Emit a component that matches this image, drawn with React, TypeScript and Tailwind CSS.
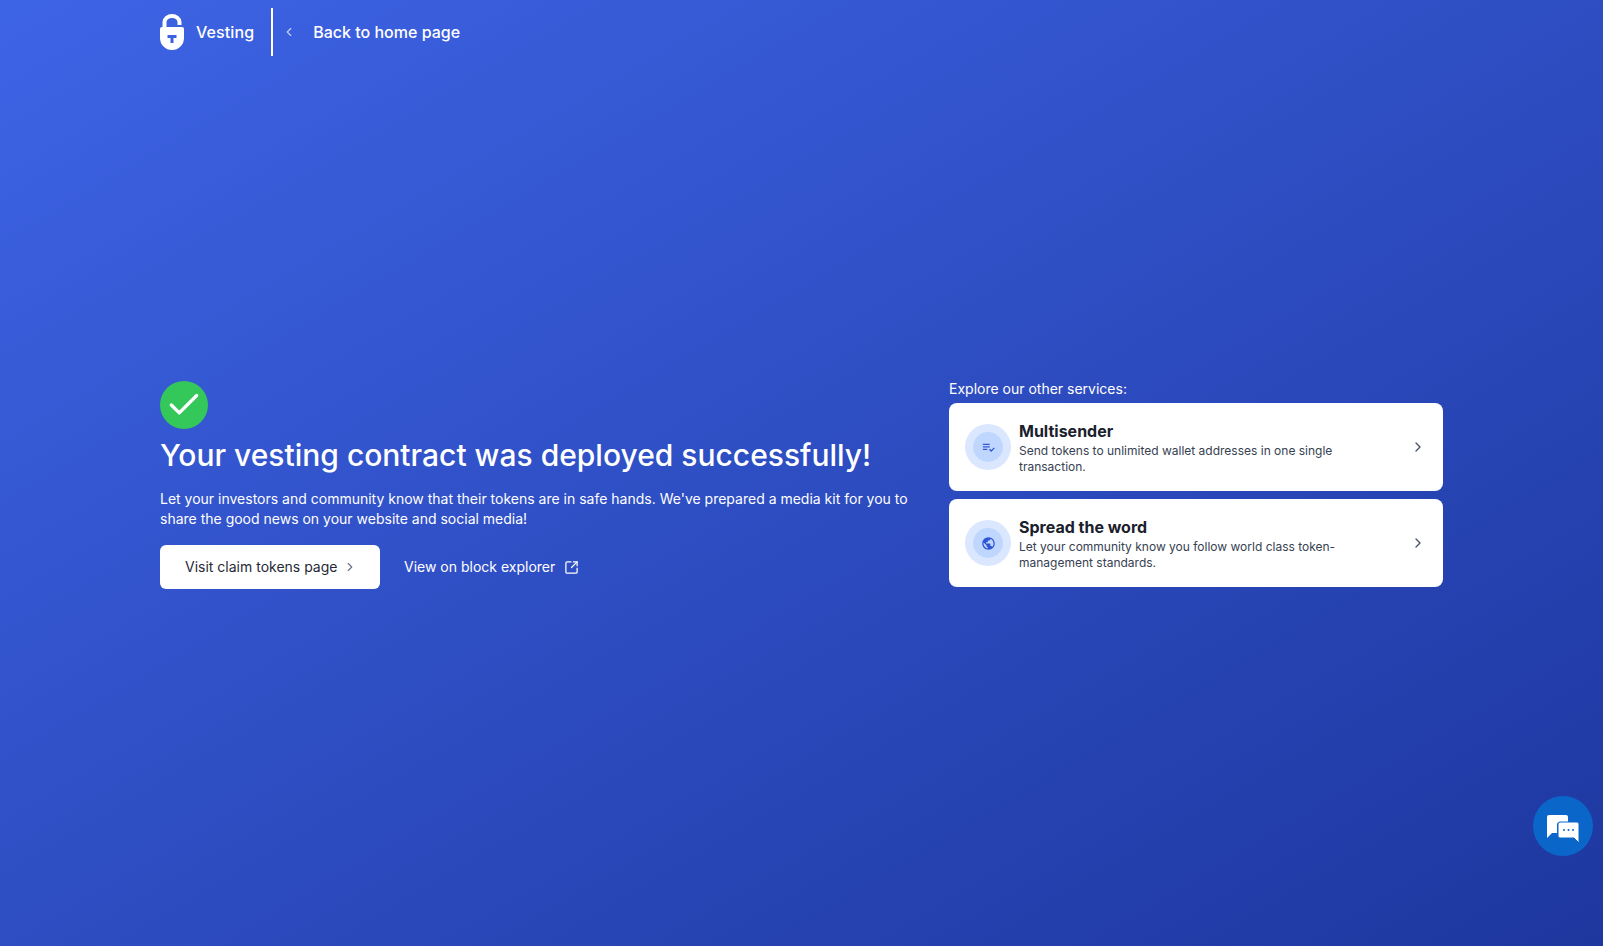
import React from 'react';
import { ChevronLeft, ChevronRight, SquareArrowOutUpRight, Check } from 'lucide-react';
import { MdPlaylistAddCheck, MdPublic } from 'react-icons/md';

const services = [
    {
        id: 1,
        title: "Multisender",
        details: "Send tokens to unlimited wallet addresses in one single transaction.",
        icon: <MdPlaylistAddCheck className="w-[15px] h-[15px] text-[#3358d4]" />,
    },
    {
        id: 2,
        title: "Spread the word",
        details: "Let your community know you follow world class token-management standards.",
        icon: <MdPublic className="w-[15px] h-[15px] text-[#2f55d4]" />,
    },
];

const LockLogo = () => (
    <svg width="24" height="36" viewBox="0 0 24 36" fill="none">
        <path d="M4.500 14V8a7.500 6 0 0 1 15 0V11" stroke="white" strokeWidth="4" />
        <path fillRule="evenodd" clipRule="evenodd" fill="white" d="M2 13h20a2 2 0 0 1 2 2v9a12 12 0 0 1-24 0v-9a2 2 0 0 1 2-2zM7.500 21v3h3v5h3v-5h3v-3h-9z" />
    </svg>
);

const ChatBubbles = () => (
    <svg width="32" height="28" viewBox="0 0 32 28" fill="none" className="mt-[5px]">
        <path fill="white" d="M2 0h17a2 2 0 0 1 2 2v5H13a3 3 0 0 0-3 3v8H5l-5 5V2a2 2 0 0 1 2-2z" />
        <path fill="white" stroke="#0a66c9" strokeWidth="1" d="M13 7h17a2 2 0 0 1 2 2v19l-5-5H13a2 2 0 0 1-2-2V9a2 2 0 0 1 2-2z" />
        <circle cx="17" cy="15" r="1" fill="#0a66c9" />
        <circle cx="21.500" cy="15" r="1" fill="#0a66c9" />
        <circle cx="26" cy="15" r="1" fill="#0a66c9" />
    </svg>
);

const App = () => {
    return (
        <div className="relative h-screen overflow-hidden bg-gradient-to-br from-[#3e64e6] to-[#1e379f] font-['Inter',sans-serif] text-white">
            <div className="pl-[160px] pr-[160px]">

                {/* Header */}
                <header className="flex items-center h-[64px]">
                    <LockLogo />
                    <span className="ml-3 text-base font-medium tracking-[0.1px]">Vesting</span>
                    <div className="ml-[17px] w-[2px] h-[48px] bg-white" />
                    <ChevronLeft className="ml-[9px] w-[14px] h-[14px] text-white/70" />
                    <span className="ml-[17px] text-base font-medium">Back to home page</span>
                </header>

                <main className="flex items-start justify-between pt-[317px]">

                    {/* Success message */}
                    <div className="w-[760px]">
                        <div className="w-12 h-12 rounded-full bg-[#34c759] flex items-center justify-center">
                            <Check className="w-[38px] h-[38px] text-white" strokeWidth={2.1} />
                        </div>
                        <h1 className="mt-[5px] text-[30px] leading-[42px] font-medium">
                            Your vesting contract was deployed successfully!
                        </h1>
                        <p className="mt-[13px] text-sm leading-5">
                            Let your investors and community know that their tokens are in safe hands. We've prepared a media kit for you to share the good news on your website and social media!
                        </p>
                        <div className="mt-4 flex items-center">
                            <button className="h-[44px] w-[220px] rounded-md bg-white text-[#1f2937] text-sm flex items-center pl-[25px] gap-[6px]">
                                Visit claim tokens page
                                <ChevronRight className="w-[14px] h-[14px] text-gray-500" />
                            </button>
                            <a className="ml-6 text-sm flex items-center gap-[9px]">
                                View on block explorer
                                <SquareArrowOutUpRight className="w-[15px] h-[15px]" />
                            </a>
                        </div>
                    </div>

                    {/* Other services */}
                    <div className="w-[494px]">
                        <p className="text-sm leading-[22px] font-normal -mt-[3px] pb-[3px]">Explore our other services:</p>
                        <div className="flex flex-col gap-2">
                            {services.map((service) => (
                                <div key={service.id} className="h-[88px] rounded-lg bg-white pl-4 pr-[17px] flex items-center text-[#1a202c]">
                                    <div className="w-[46px] h-[46px] shrink-0 rounded-full bg-[#dbe7ff] flex items-center justify-center">
                                        <div className="w-[30px] h-[30px] rounded-full bg-[#bfd6ff] flex items-center justify-center">
                                            {service.icon}
                                        </div>
                                    </div>
                                    <div className="ml-2 mt-[1px] flex-1 pr-[60px]">
                                        <h3 className="text-base leading-[22px] font-bold">{service.title}</h3>
                                        <p className="text-xs leading-4 pt-[1px] text-[#374151]">{service.details}</p>
                                    </div>
                                    <ChevronRight className="w-4 h-4 text-[#475569]" />
                                </div>
                            ))}
                        </div>
                    </div>
                </main>
            </div>

            {/* Chat widget */}
            <div className="absolute right-[10px] bottom-[90px] w-[60px] h-[60px] rounded-full bg-[#0a66c9] flex items-center justify-center">
                <ChatBubbles />
            </div>
        </div>
    );
};

export default App;
